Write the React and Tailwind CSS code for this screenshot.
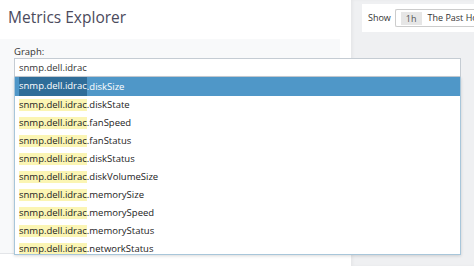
const items = [
    "diskSize",
    "diskState",
    "fanSpeed",
    "fanStatus",
    "diskStatus",
    "diskVolumeSize",
    "memorySize",
    "memorySpeed",
    "memoryStatus",
    "networkStatus",
];

const App = () => {
    return (
        <div className="flex h-[266px] w-[474px] overflow-hidden bg-white font-['Open_Sans',sans-serif] text-[9px] text-[#2b2b2b]">
            <div className="w-[351px] shrink-0">
                <h1 className="pl-[8px] pt-[7px] text-[15.5px] leading-[20px] text-[#4b4a5c]">Metrics Explorer</h1>
                <div className="mt-[12px] h-[215px] w-[340px] border-b border-[#e3e5e8] bg-[#f8f9fa] pl-[14px] pt-[7px]">
                    <div className="text-[9.5px] leading-[12px] text-[#333]">Graph:</div>
                    <div className="relative z-10 w-[447px]">
                        <div className="h-[19px] border border-[#c5ccd3] bg-white pl-[4px] text-[9.5px] leading-[17px] text-[#333]">
                            snmp.dell.idrac
                        </div>
                        <div className="absolute left-0 top-[19px] h-[178px] w-[447px] overflow-hidden border border-t-0 border-[#a8c6da] bg-white text-[9.5px] shadow-[0_1px_3px_rgba(0,0,0,0.15)]">
                            {items.map((name, i) => (
                                <div
                                    key={name}
                                    className={
                                        i === 0
                                            ? "flex h-[19px] items-center whitespace-nowrap bg-[#4f97c8] pl-[4px] text-white"
                                            : "flex h-[18px] items-center whitespace-nowrap pl-[4px] text-[#222]"
                                    }
                                >
                                    <span
                                        className={
                                            i === 0
                                                ? "flex h-[19px] items-center bg-[#2f6d99]"
                                                : "inline-block bg-[#fbf5b4] leading-[12px]"
                                        }
                                    >
                                        snmp.dell.idrac
                                    </span>
                                    <span className="leading-[12px]">.{name}</span>
                                </div>
                            ))}
                        </div>
                    </div>
                </div>
            </div>
            <div className="flex-1 bg-[#eff0f2] pl-[11px] pt-[4px] shadow-[inset_2px_0_3px_rgba(0,0,0,0.04)]">
                <div className="flex h-[28px] items-center bg-white pl-[6px] text-[9px] text-[#333]">
                    <span>Show</span>
                    <div className="ml-[4px] flex h-[18px] items-center whitespace-nowrap rounded-l-[2px] border border-r-0 border-[#ccc] pl-[5px]">
                        <span className="bg-[#e6e6e6] px-[5px] leading-[13px] text-[#555]">1h</span>
                        <span className="ml-[6px]">The Past Hour</span>
                    </div>
                </div>
            </div>
        </div>
    );
};

export default App;
